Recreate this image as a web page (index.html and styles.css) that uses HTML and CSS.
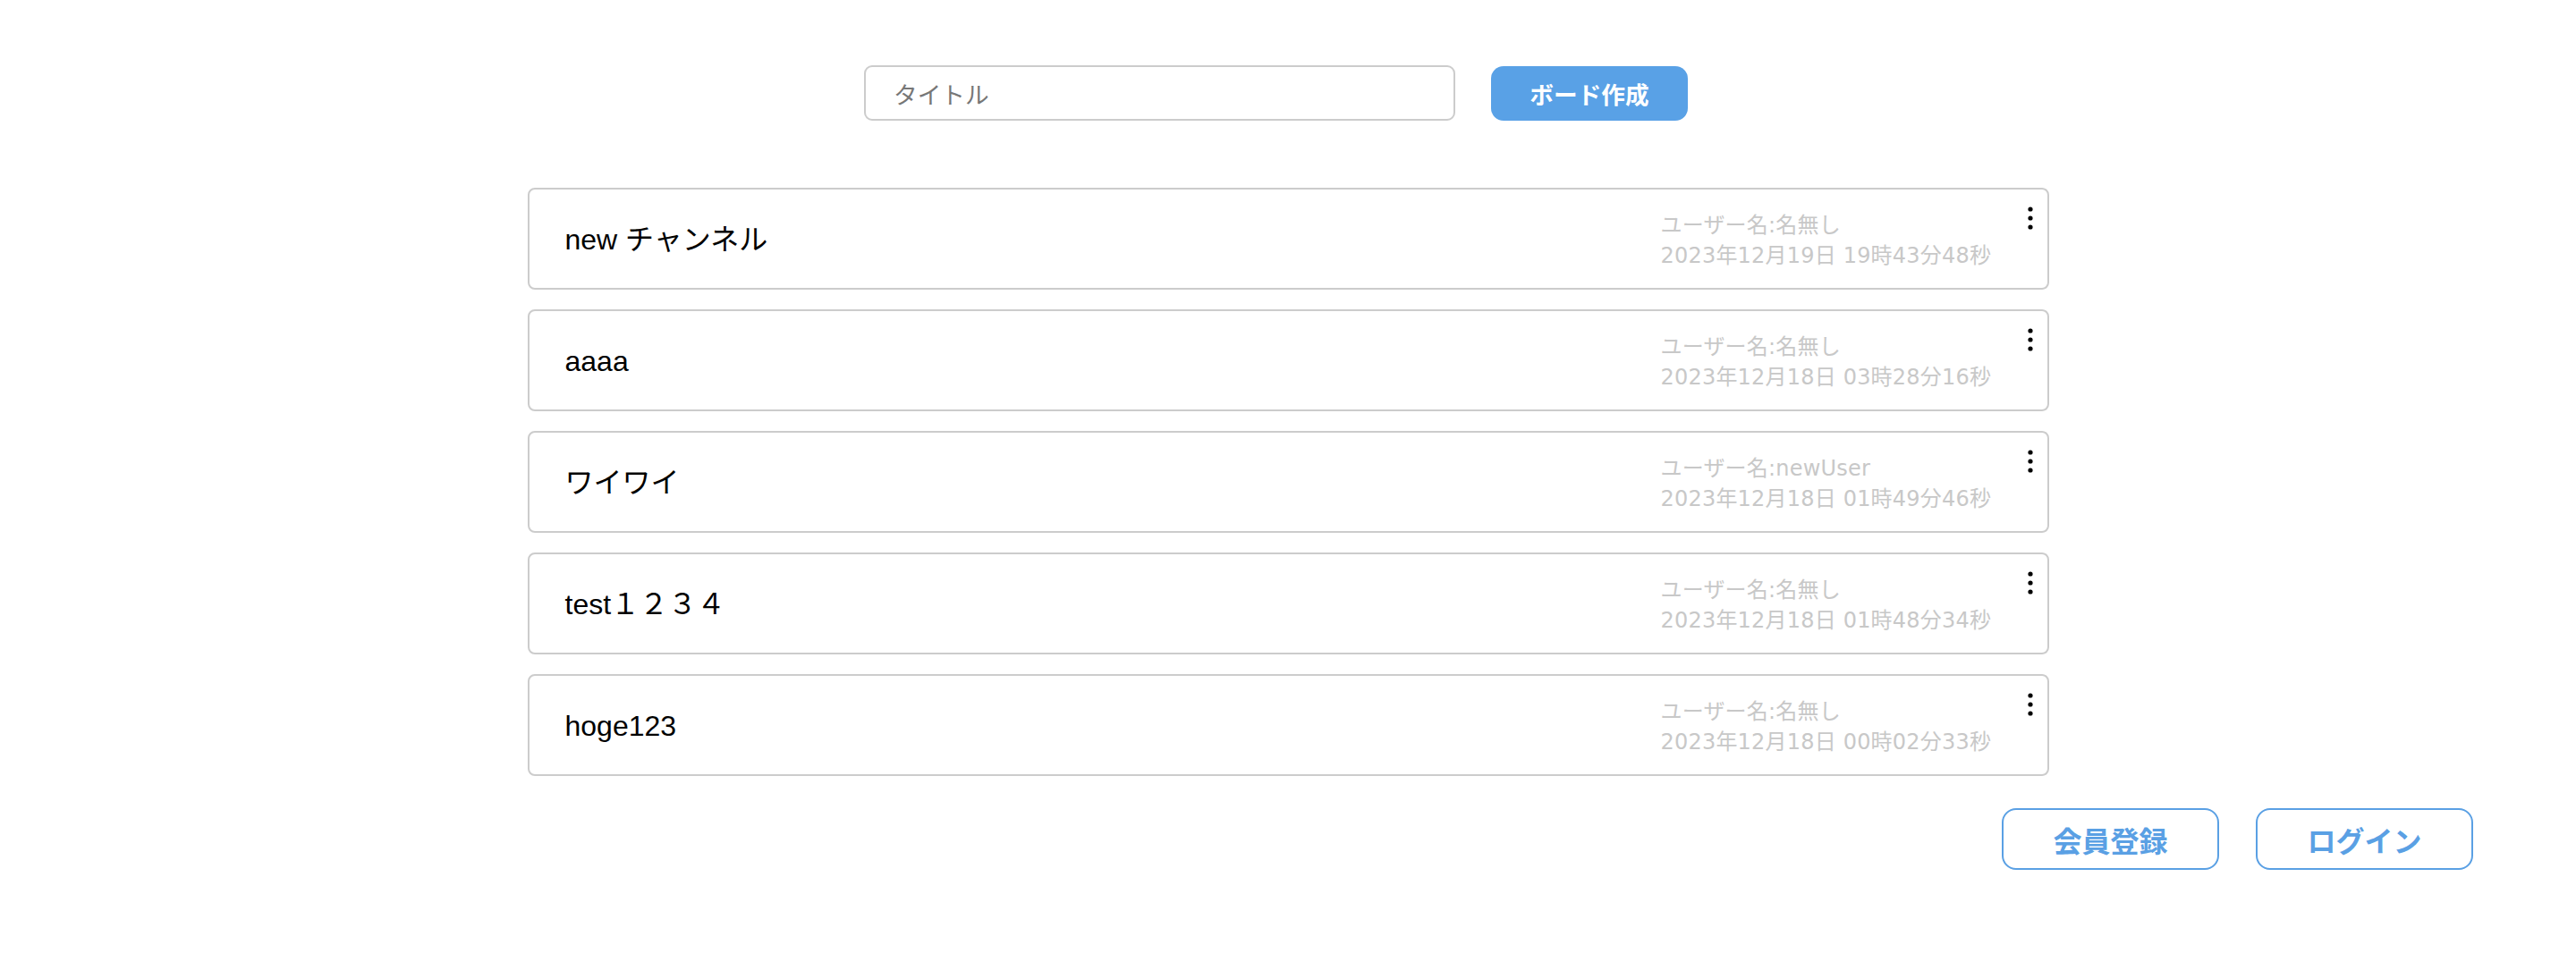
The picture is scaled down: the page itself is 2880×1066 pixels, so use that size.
FILE: index.html
```html
<!DOCTYPE html>
<html lang="ja">
<head>
<meta charset="utf-8">
<title>ボード一覧</title>
<link rel="stylesheet" href="styles.css">
</head>
<body>
<div class="page">
  <form class="create-row" onsubmit="return false;">
    <input class="title-input" type="text" placeholder="タイトル">
    <button class="create-btn" type="submit">ボード作成</button>
  </form>

  <ul class="board-list">
    <li class="board-card">
      <div class="board-title">new チャンネル</div>
      <div class="board-meta">
        <div>ユーザー名:名無し</div>
        <div>2023年12月19日 19時43分48秒</div>
      </div>
      <button class="kebab" type="button" aria-label="メニュー"><svg viewBox="0 0 10 30" width="10" height="30"><circle cx="5" cy="5" r="2.6"/><circle cx="5" cy="15" r="2.6"/><circle cx="5" cy="25" r="2.6"/></svg></button>
    </li>
    <li class="board-card">
      <div class="board-title">aaaa</div>
      <div class="board-meta">
        <div>ユーザー名:名無し</div>
        <div>2023年12月18日 03時28分16秒</div>
      </div>
      <button class="kebab" type="button" aria-label="メニュー"><svg viewBox="0 0 10 30" width="10" height="30"><circle cx="5" cy="5" r="2.6"/><circle cx="5" cy="15" r="2.6"/><circle cx="5" cy="25" r="2.6"/></svg></button>
    </li>
    <li class="board-card">
      <div class="board-title">ワイワイ</div>
      <div class="board-meta">
        <div>ユーザー名:newUser</div>
        <div>2023年12月18日 01時49分46秒</div>
      </div>
      <button class="kebab" type="button" aria-label="メニュー"><svg viewBox="0 0 10 30" width="10" height="30"><circle cx="5" cy="5" r="2.6"/><circle cx="5" cy="15" r="2.6"/><circle cx="5" cy="25" r="2.6"/></svg></button>
    </li>
    <li class="board-card">
      <div class="board-title">test１２３４</div>
      <div class="board-meta">
        <div>ユーザー名:名無し</div>
        <div>2023年12月18日 01時48分34秒</div>
      </div>
      <button class="kebab" type="button" aria-label="メニュー"><svg viewBox="0 0 10 30" width="10" height="30"><circle cx="5" cy="5" r="2.6"/><circle cx="5" cy="15" r="2.6"/><circle cx="5" cy="25" r="2.6"/></svg></button>
    </li>
    <li class="board-card">
      <div class="board-title">hoge123</div>
      <div class="board-meta">
        <div>ユーザー名:名無し</div>
        <div>2023年12月18日 00時02分33秒</div>
      </div>
      <button class="kebab" type="button" aria-label="メニュー"><svg viewBox="0 0 10 30" width="10" height="30"><circle cx="5" cy="5" r="2.6"/><circle cx="5" cy="15" r="2.6"/><circle cx="5" cy="25" r="2.6"/></svg></button>
    </li>
  </ul>

  <div class="auth-row">
    <button class="outline-btn" type="button">会員登録</button>
    <button class="outline-btn" type="button">ログイン</button>
  </div>
</div>
</body>
</html>
```

FILE: styles.css
```css
* {
  box-sizing: border-box;
}

html, body {
  margin: 0;
  padding: 0;
  background: #ffffff;
}

body {
  font-family: "Liberation Sans", "Noto Sans CJK JP", sans-serif;
  color: #000;
}

.page {
  display: flex;
  flex-direction: column;
  padding-top: 73px;
}

.create-row {
  display: flex;
  justify-content: center;
  align-items: center;
  gap: 40px;
  padding-right: 27px;
  margin: 0;
}

.title-input {
  width: 661px;
  height: 62px;
  border: 2px solid #cccccc;
  border-radius: 9px;
  padding: 0 0 0 31px;
  font-family: "Noto Sans CJK JP", sans-serif;
  font-size: 26.67px;
  color: #000;
  background: #fff;
  outline: none;
}

.title-input::placeholder {
  color: #777777;
}

.create-btn {
  width: 220px;
  height: 61px;
  border: none;
  border-radius: 14px;
  background: #59a1e6;
  color: #ffffff;
  font-family: "Noto Sans CJK JP", sans-serif;
  font-weight: 700;
  font-size: 26.67px;
  padding: 0;
  cursor: pointer;
}

.board-list {
  list-style: none;
  margin: 75px auto 0;
  padding: 0;
  width: 1701px;
  display: flex;
  flex-direction: column;
  gap: 22px;
}

.board-card {
  position: relative;
  display: flex;
  align-items: center;
  height: 114px;
  border: 2px solid #cccccc;
  border-radius: 8px;
  padding: 0 40px 0 40px;
}

.board-title {
  flex: 1;
  font-size: 32px;
  line-height: 40px;
  padding-top: 2px;
}

.board-meta {
  width: 392px;
  font-family: "DejaVu Sans", "Noto Sans CJK JP", sans-serif;
  font-size: 24px;
  line-height: 34px;
  letter-spacing: 0.2px;
  color: #c8c8c8;
  padding-top: 4px;
}

.kebab {
  position: absolute;
  top: 17px;
  right: 14px;
  width: 10px;
  height: 30px;
  padding: 0;
  border: none;
  background: transparent;
  display: block;
}

.kebab svg {
  display: block;
  fill: #000;
}

.auth-row {
  display: flex;
  justify-content: flex-end;
  gap: 41px;
  margin-top: 36px;
  padding-right: 115px;
}

.outline-btn {
  width: 243px;
  height: 69px;
  border: 2px solid #5aa0e4;
  border-radius: 16px;
  background: #ffffff;
  color: #5aa0e4;
  font-family: "Noto Sans CJK JP", sans-serif;
  font-weight: 700;
  font-size: 32px;
  padding: 0;
  cursor: pointer;
}
```
